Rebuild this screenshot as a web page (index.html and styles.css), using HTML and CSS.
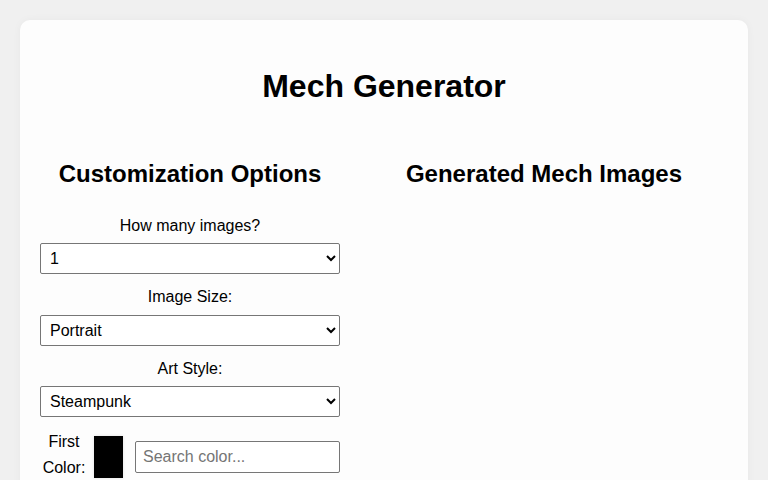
FILE: index.html
```html
<!DOCTYPE html>
<html lang="en">
<head>
    <meta charset="UTF-8">
    <title>Mech Generator</title>
    <link rel="stylesheet" href="styles.css">
</head>
<body>

<div class="container">
    <h1>Mech Generator</h1>

    <div class="columns">
        <div class="options">
            <h2>Customization Options</h2>

            <label for="count">How many images?</label>
            <select id="count">
                <option>1</option>
                <option>2</option>
                <option>3</option>
                <option>4</option>
            </select>

            <label for="size">Image Size:</label>
            <select id="size">
                <option>Portrait</option>
                <option>Landscape</option>
                <option>Square</option>
            </select>

            <label for="style">Art Style:</label>
            <select id="style">
                <option>Steampunk</option>
                <option>Cyberpunk</option>
                <option>Realistic</option>
            </select>

            <div class="color-row">
                <label for="color1">First Color:</label>
                <input type="color" id="color1" value="#000000">
                <input type="text" class="color-search" placeholder="Search color...">
            </div>
        </div>

        <div class="results">
            <h2>Generated Mech Images</h2>
            <!-- сюда попадут картинки -->
        </div>
    </div>
</div>

</body>
</html>
```

FILE: styles.css
```css
body {
    margin: 0;
    padding: 20px;
    background-color: #f0f0f0;
    font-family: 'Liberation Sans', Arial, sans-serif;
    font-size: 16px;
    line-height: 1.6;
    color: #000;
}

.container {
    background: #fdfdfd;
    border-radius: 10px;
    box-shadow: 0 0 8px rgba(0, 0, 0, 0.04);
    padding: 20px;
    min-height: 600px;
}

h1 {
    font-size: 32px;
    text-align: center;
    margin: 21px 0;
}

h2 {
    font-size: 24px;
    margin: 22px 0 19px;
}

.columns {
    display: flex;
    gap: 20px;
}

.options {
    width: 300px;
    flex-shrink: 0;
    text-align: center;
}

.results {
    flex: 1;
    text-align: center;
}

.options label {
    display: block;
    margin-bottom: 5px;
}

select {
    display: block;
    width: 100%;
    padding: 5px;
    margin-bottom: 10px;
    font-family: inherit;
    font-size: 16px;
    color: #000;
    background: #fff;
    border: 1px solid #767676;
    border-radius: 2px;
}

.color-row {
    display: flex;
    align-items: center;
    gap: 6px;
    padding-top: 6px;
}

.color-row label {
    margin: -4px 0 0;
    width: 48px;
    flex-shrink: 0;
    line-height: 26px;
}

input[type="color"] {
    width: 29px;
    height: 42px;
    padding: 0;
    border: none;
    background: none;
    box-shadow: 0 0 3px rgba(0, 0, 0, 0.12);
    cursor: pointer;
}

input[type="color"]::-webkit-color-swatch-wrapper {
    padding: 0;
}

input[type="color"]::-webkit-color-swatch {
    border: none;
}

.color-search {
    flex: 1;
    min-width: 0;
    height: 32px;
    box-sizing: border-box;
    margin-left: 6px;
    padding: 5px 7px;
    font-family: inherit;
    font-size: 16px;
    border: 1px solid #767676;
    border-radius: 2px;
}

.color-search::placeholder {
    color: #757575;
}
```
